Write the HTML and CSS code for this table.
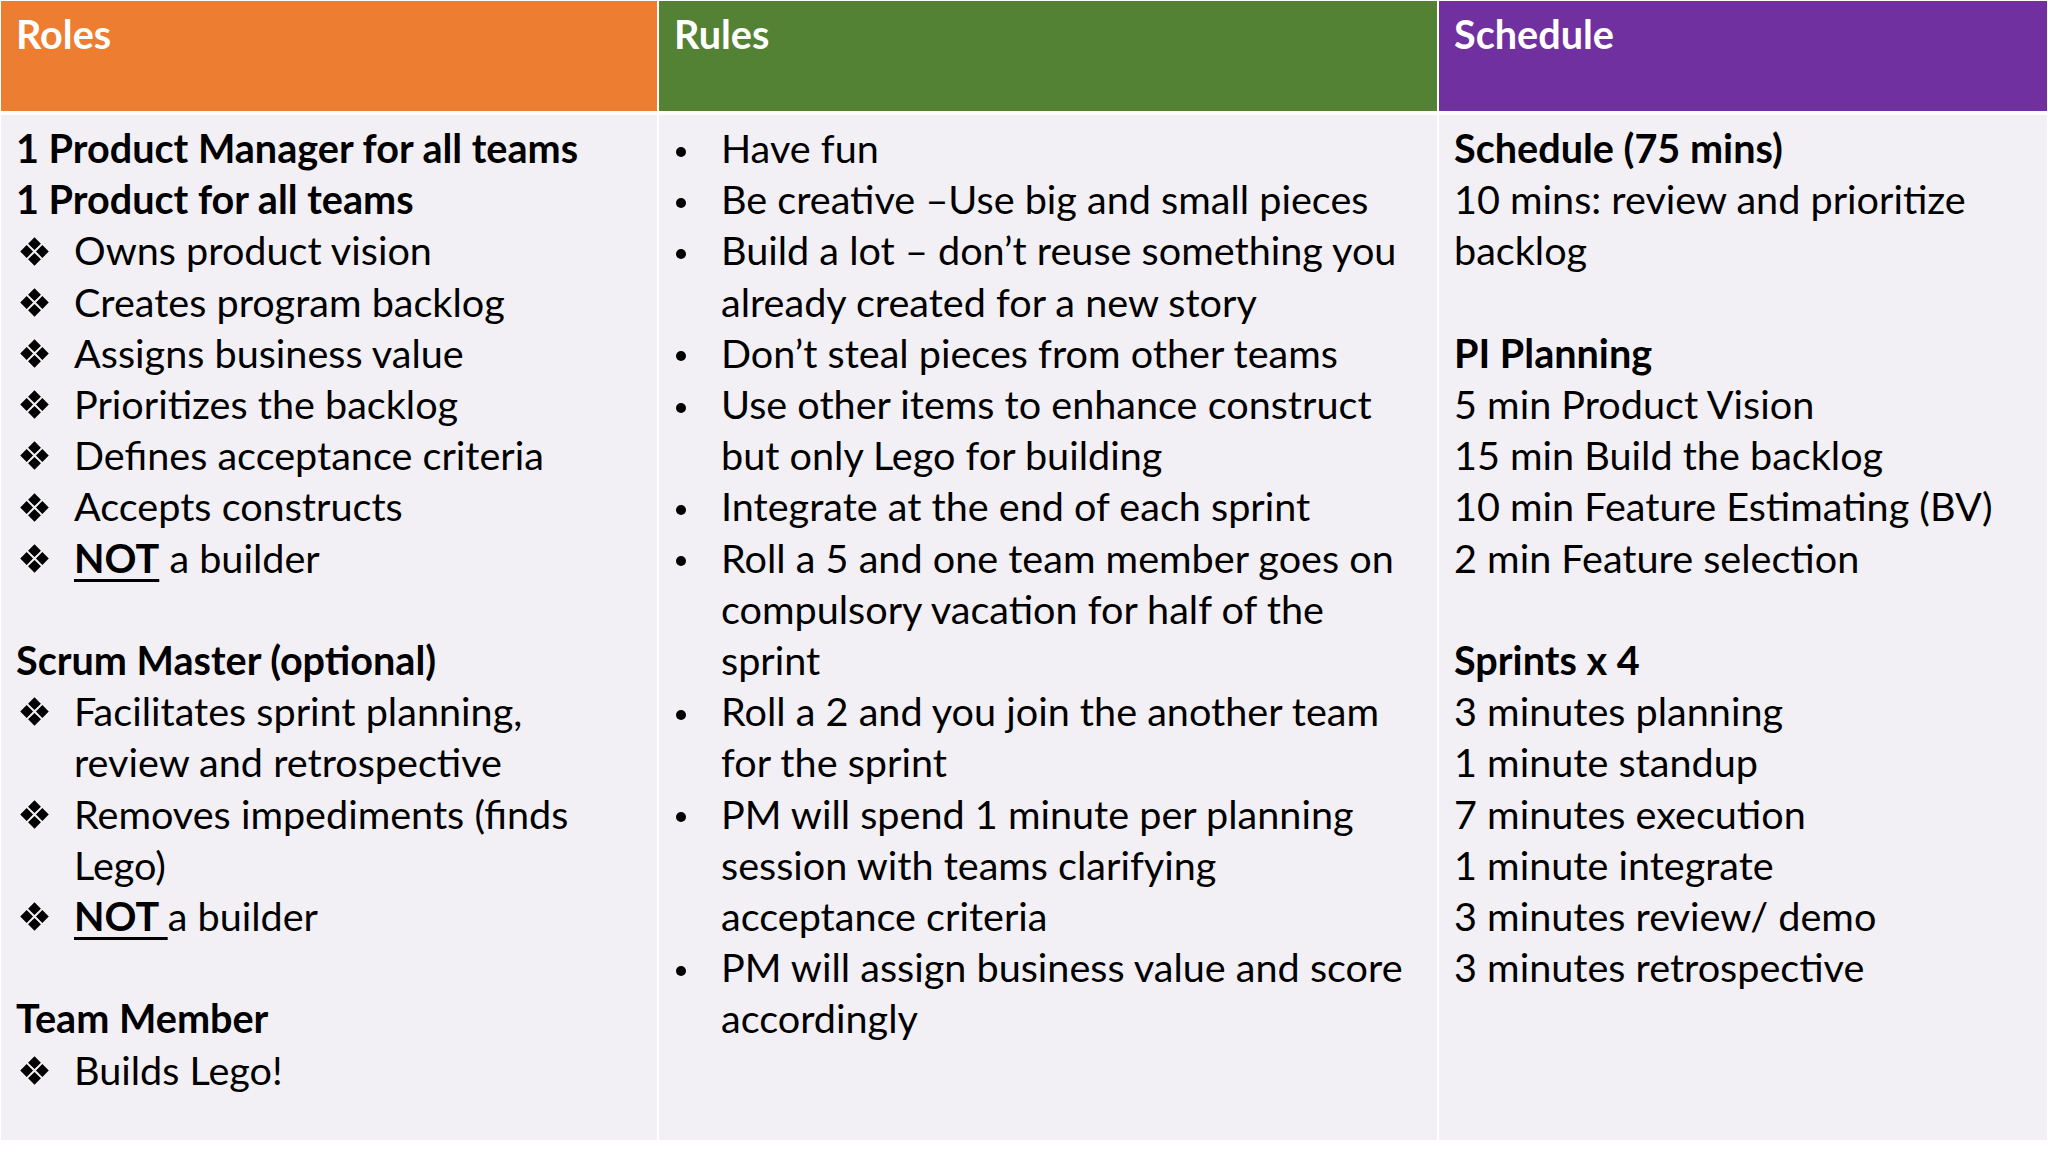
FILE: index.html
```html
<!DOCTYPE html>
<html lang="en">
<head>
<meta charset="utf-8">
<title>Roles, Rules, Schedule</title>
<link rel="stylesheet" href="styles.css">
</head>
<body>
<svg width="0" height="0" class="defs" aria-hidden="true">
  <defs>
    <symbol id="dia" viewBox="0 0 30 30">
      <path d="M15 1.2 L21.2 7.4 L15 13.6 L8.8 7.4 Z M7.4 8.8 L13.6 15 L7.4 21.2 L1.2 15 Z M22.6 8.8 L28.8 15 L22.6 21.2 L16.4 15 Z M15 16.4 L21.2 22.6 L15 28.8 L8.8 22.6 Z" fill="#000"/>
    </symbol>
  </defs>
</svg>
<div class="table">
  <div class="head roles">Roles</div>
  <div class="head rules">Rules</div>
  <div class="head schedule">Schedule</div>

  <div class="cell">
    <div class="line b">1 Product Manager for all teams</div>
    <div class="line b">1 Product for all teams</div>
    <div class="item"><span class="mk"><svg class="dia"><use href="#dia"/></svg></span><span class="tx">Owns product vision</span></div>
    <div class="item"><span class="mk"><svg class="dia"><use href="#dia"/></svg></span><span class="tx">Creates program backlog</span></div>
    <div class="item"><span class="mk"><svg class="dia"><use href="#dia"/></svg></span><span class="tx">Assigns business value</span></div>
    <div class="item"><span class="mk"><svg class="dia"><use href="#dia"/></svg></span><span class="tx">Prioritizes the backlog</span></div>
    <div class="item"><span class="mk"><svg class="dia"><use href="#dia"/></svg></span><span class="tx">Defines acceptance criteria</span></div>
    <div class="item"><span class="mk"><svg class="dia"><use href="#dia"/></svg></span><span class="tx">Accepts constructs</span></div>
    <div class="item"><span class="mk"><svg class="dia"><use href="#dia"/></svg></span><span class="tx"><span class="u">NOT</span> a builder</span></div>
    <div class="blank"></div>
    <div class="line b">Scrum Master (optional)</div>
    <div class="item"><span class="mk"><svg class="dia"><use href="#dia"/></svg></span><span class="tx">Facilitates sprint planning,<br>review and retrospective</span></div>
    <div class="item"><span class="mk"><svg class="dia"><use href="#dia"/></svg></span><span class="tx">Removes impediments (finds<br>Lego)</span></div>
    <div class="item"><span class="mk"><svg class="dia"><use href="#dia"/></svg></span><span class="tx"><span class="u">NOT </span>a builder</span></div>
    <div class="blank"></div>
    <div class="line b">Team Member</div>
    <div class="item"><span class="mk"><svg class="dia"><use href="#dia"/></svg></span><span class="tx">Builds Lego!</span></div>
  </div>

  <div class="cell">
    <div class="item dot"><span class="mk"><span class="bul"></span></span><span class="tx">Have fun</span></div>
    <div class="item dot"><span class="mk"><span class="bul"></span></span><span class="tx">Be creative –Use big and small pieces</span></div>
    <div class="item dot"><span class="mk"><span class="bul"></span></span><span class="tx">Build a lot – don’t reuse something you<br>already created for a new story</span></div>
    <div class="item dot"><span class="mk"><span class="bul"></span></span><span class="tx">Don’t steal pieces from other teams</span></div>
    <div class="item dot"><span class="mk"><span class="bul"></span></span><span class="tx">Use other items to enhance construct<br>but only Lego for building</span></div>
    <div class="item dot"><span class="mk"><span class="bul"></span></span><span class="tx">Integrate at the end of each sprint</span></div>
    <div class="item dot"><span class="mk"><span class="bul"></span></span><span class="tx">Roll a 5 and one team member goes on<br>compulsory vacation for half of the<br>sprint</span></div>
    <div class="item dot"><span class="mk"><span class="bul"></span></span><span class="tx">Roll a 2 and you join the another team<br>for the sprint</span></div>
    <div class="item dot"><span class="mk"><span class="bul"></span></span><span class="tx">PM will spend 1 minute per planning<br>session with teams clarifying<br>acceptance criteria</span></div>
    <div class="item dot"><span class="mk"><span class="bul"></span></span><span class="tx">PM will assign business value and score<br>accordingly</span></div>
  </div>

  <div class="cell">
    <div class="line b">Schedule (75 mins)</div>
    <div class="line">10 mins: review and prioritize<br>backlog</div>
    <div class="blank"></div>
    <div class="line b">PI Planning</div>
    <div class="line">5 min Product Vision</div>
    <div class="line">15 min Build the backlog</div>
    <div class="line">10 min Feature Estimating (BV)</div>
    <div class="line">2 min Feature selection</div>
    <div class="blank"></div>
    <div class="line b">Sprints x 4</div>
    <div class="line">3 minutes planning</div>
    <div class="line">1 minute standup</div>
    <div class="line">7 minutes execution</div>
    <div class="line">1 minute integrate</div>
    <div class="line">3 minutes review/ demo</div>
    <div class="line">3 minutes retrospective</div>
  </div>
</div>
</body>
</html>
```

FILE: styles.css
```css
html, body {
  margin: 0;
  padding: 0;
  background: #ffffff;
}
body {
  width: 2048px;
  height: 1152px;
  overflow: hidden;
  font-family: Lato, "Open Sans", sans-serif;
  font-size: 39.6px;
  line-height: 51.2px;
  color: #000;
}
.defs {
  position: absolute;
  width: 0;
  height: 0;
}
.table {
  display: grid;
  grid-template-columns: 656px 778px 608px;
  grid-template-rows: 110px 1025px;
  column-gap: 2px;
  row-gap: 4px;
  padding: 1px 0 0 1px;
}
.head {
  color: #fff;
  font-weight: 700;
  padding: 7px 15px;
}
.roles { background: #ed7d31; }
.rules { background: #548235; }
.schedule { background: #7030a0; }
.cell {
  background: #f2f0f4;
  padding: 7px 15px;
  white-space: nowrap;
}
.b { font-weight: 700; }
.blank { height: 51.2px; }
.item {
  display: flex;
  align-items: flex-start;
}
.mk {
  flex: 0 0 58px;
  height: 51.2px;
  display: flex;
  align-items: center;
}
.dia {
  width: 31px;
  height: 31px;
  margin-left: 3px;
  margin-top: 2px;
}
.item.dot .mk {
  flex-basis: 47px;
}
.bul {
  display: block;
  width: 10px;
  height: 10px;
  border-radius: 50%;
  background: #000;
  margin-left: 2px;
  margin-top: 8px;
}
.u {
  font-weight: 700;
  text-decoration: underline;
  text-decoration-thickness: 3px;
  text-underline-offset: 6px;
}
```
